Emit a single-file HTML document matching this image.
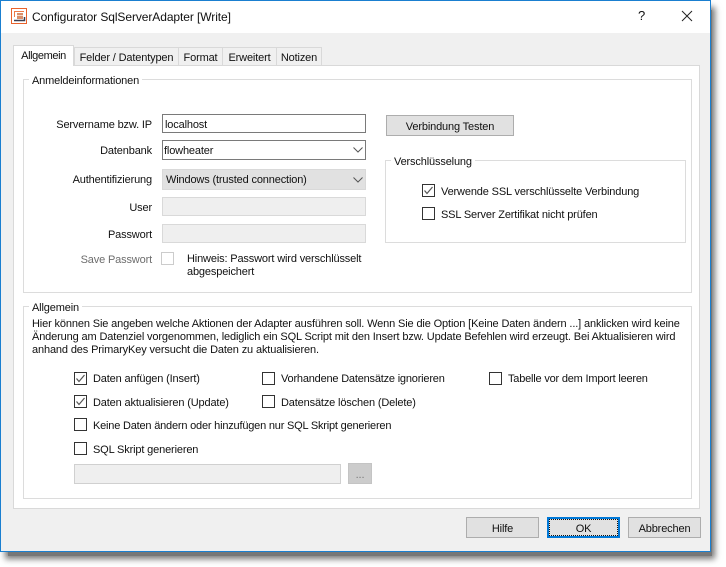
<!DOCTYPE html>
<html lang="de">
<head>
<meta charset="utf-8">
<title>Configurator SqlServerAdapter [Write]</title>
<style>
html,body{margin:0;padding:0;background:#fff;}
body{position:relative;width:726px;height:567px;overflow:hidden;font-family:"Liberation Sans",sans-serif;font-size:11px;letter-spacing:-0.15px;color:#111;}
div,span{position:absolute;box-sizing:border-box;}
.t{white-space:nowrap;line-height:18px;height:18px;}
.r{text-align:right;right:574px;}
.g{border:1px solid #dcdcdc;}
.leg{background:#fff;padding:0 3px;white-space:nowrap;line-height:18px;height:16px;overflow:hidden;}
.tab{background:#f0f0f0;border:1px solid #d9d9d9;border-bottom:0;text-align:center;line-height:20px;white-space:nowrap;}
.in{background:#fff;border:1px solid #7a7a7a;padding-left:1px;line-height:20px;}
.dis{background:#efefef;border:1px solid #d9d9d9;}
.btn{background:#e1e1e1;border:1px solid #adadad;text-align:center;line-height:22px;white-space:nowrap;}
.cb{width:13px;height:13px;background:#fff;border:1px solid #333;}
</style>
</head>
<body>
<div style="left:8px;top:10px;width:704px;height:546px;background:#777;box-shadow:0 0 6px 3px #777;"></div>
<div style="left:0;top:0;width:711px;height:552px;background:#f0f0f0;border:1px solid #1a7fd0;"></div>
<div style="left:1px;top:1px;width:709px;height:32px;background:#fff;"></div>

<svg style="position:absolute;left:11px;top:8px" width="17" height="17" viewBox="0 0 17 17">
<rect x="0.5" y="0.5" width="15" height="15" fill="#fff" stroke="#e8622c"/>
<path d="M3 3.500H13M3.500 3V9" stroke="#ee7a48" fill="none"/>
<rect x="6" y="5" width="6" height="6" fill="#d98f6a"/>
<path d="M6 7.500H12" stroke="#f4d8c8"/>
<path d="M3 12.500H13.500V9" stroke="#3a3f50" stroke-width="1.500" fill="none"/>
</svg>
<span class="t" style="left:32px;top:8px;font-size:12px;letter-spacing:-0.08px;">Configurator SqlServerAdapter [Write]</span>
<span class="t" style="left:638px;top:7px;font-size:13px;letter-spacing:0;">?</span>
<svg style="position:absolute;left:681px;top:10px" width="12" height="12" viewBox="0 0 12 12"><path d="M1 1L11 11M11 1L1 11" stroke="#222" stroke-width="1" fill="none"/></svg>

<div style="left:13px;top:65px;width:687px;height:444px;background:#fff;border:1px solid #d9d9d9;"></div>
<div class="tab" style="left:74px;top:47px;width:105px;height:18px;">Felder / Datentypen</div>
<div class="tab" style="left:178px;top:47px;width:45px;height:18px;">Format</div>
<div class="tab" style="left:222px;top:47px;width:55px;height:18px;">Erweitert</div>
<div class="tab" style="left:276px;top:47px;width:46px;height:18px;">Notizen</div>
<div class="tab" style="left:13px;top:45px;width:61px;height:21px;background:#fff;line-height:20px;letter-spacing:-0.4px;">Allgemein</div>

<div class="g" style="left:23px;top:79px;width:669px;height:214px;"></div>
<div class="leg" style="left:29px;top:72px;">Anmeldeinformationen</div>

<span class="t r" style="top:116px;">Servername bzw. IP</span>
<span class="t r" style="top:142px;">Datenbank</span>
<span class="t r" style="top:171px;">Authentifizierung</span>
<span class="t r" style="top:199px;">User</span>
<span class="t r" style="top:226px;">Passwort</span>
<span class="t r" style="top:251px;color:#6d6d6d;">Save Passwort</span>

<div class="in" style="left:162px;top:114px;width:204px;height:19px;padding-left:2px;">localhost</div>
<div class="in" style="left:162px;top:140px;width:204px;height:20px;">flowheater</div>
<svg style="position:absolute;left:353px;top:147px" width="10" height="6" viewBox="0 0 10 6"><path d="M0.500 0.500L5 5L9.500 0.500" stroke="#555" fill="none"/></svg>
<div style="left:162px;top:169px;width:204px;height:21px;background:#e1e1e1;border:1px solid #d9d9d9;padding-left:3px;line-height:21px;">Windows (trusted connection)</div>
<svg style="position:absolute;left:353px;top:177px" width="10" height="6" viewBox="0 0 10 6"><path d="M0.500 0.500L5 5L9.500 0.500" stroke="#555" fill="none"/></svg>
<div class="dis" style="left:162px;top:197px;width:204px;height:19px;"></div>
<div class="dis" style="left:162px;top:224px;width:204px;height:19px;"></div>
<div class="cb" style="left:161px;top:252px;border-color:#ccc;"></div>
<span class="t" style="left:187px;top:250px;">Hinweis: Passwort wird verschlüsselt</span>
<span class="t" style="left:187px;top:263px;">abgespeichert</span>

<div class="btn" style="left:386px;top:115px;width:128px;height:21px;">Verbindung Testen</div>

<div class="g" style="left:385px;top:160px;width:301px;height:83px;"></div>
<div class="leg" style="left:391px;top:153px;">Verschlüsselung</div>
<div class="cb" style="left:422px;top:184px;"></div>
<svg style="position:absolute;left:422px;top:184px" width="13" height="13" viewBox="0 0 13 13"><path d="M2.500 6.500L5 9.500L10.500 3" stroke="#555" stroke-width="1.200" fill="none"/></svg>
<span class="t" style="left:441px;top:183px;">Verwende SSL verschlüsselte Verbindung</span>
<div class="cb" style="left:422px;top:207px;"></div>
<span class="t" style="left:441px;top:206px;">SSL Server Zertifikat nicht prüfen</span>

<div class="g" style="left:23px;top:306px;width:669px;height:193px;"></div>
<div class="leg" style="left:29px;top:299px;">Allgemein</div>
<span class="t" style="left:32px;top:315px;letter-spacing:-0.135px;">Hier können Sie angeben welche Aktionen der Adapter ausführen soll. Wenn Sie die Option [Keine Daten ändern ...] anklicken wird keine</span>
<span class="t" style="left:32px;top:328px;letter-spacing:-0.135px;">Änderung am Datenziel vorgenommen, lediglich ein SQL Script mit den Insert bzw. Update Befehlen wird erzeugt. Bei Aktualisieren wird</span>
<span class="t" style="left:32px;top:341px;letter-spacing:-0.135px;">anhand des PrimaryKey versucht die Daten zu aktualisieren.</span>

<div class="cb" style="left:74px;top:372px;"></div>
<svg style="position:absolute;left:74px;top:372px" width="13" height="13" viewBox="0 0 13 13"><path d="M2.500 6.500L5 9.500L10.500 3" stroke="#555" stroke-width="1.200" fill="none"/></svg>
<span class="t" style="left:93px;top:370px;">Daten anfügen (Insert)</span>
<div class="cb" style="left:262px;top:372px;"></div>
<span class="t" style="left:281px;top:370px;letter-spacing:-0.2px;">Vorhandene Datensätze ignorieren</span>
<div class="cb" style="left:489px;top:372px;"></div>
<span class="t" style="left:508px;top:370px;letter-spacing:-0.2px;">Tabelle vor dem Import leeren</span>

<div class="cb" style="left:74px;top:395px;"></div>
<svg style="position:absolute;left:74px;top:395px" width="13" height="13" viewBox="0 0 13 13"><path d="M2.500 6.500L5 9.500L10.500 3" stroke="#555" stroke-width="1.200" fill="none"/></svg>
<span class="t" style="left:93px;top:394px;">Daten aktualisieren (Update)</span>
<div class="cb" style="left:262px;top:395px;"></div>
<span class="t" style="left:281px;top:394px;">Datensätze löschen (Delete)</span>

<div class="cb" style="left:74px;top:418px;"></div>
<span class="t" style="left:93px;top:417px;letter-spacing:-0.2px;">Keine Daten ändern oder hinzufügen nur SQL Skript generieren</span>
<div class="cb" style="left:74px;top:442px;"></div>
<span class="t" style="left:93px;top:441px;">SQL Skript generieren</span>

<div class="dis" style="left:74px;top:464px;width:267px;height:20px;border-color:#d0d0d0;"></div>
<div class="btn" style="left:348px;top:463px;width:24px;height:21px;background:#ccc;border-color:#c4c4c4;color:#777;">...</div>

<div class="btn" style="left:466px;top:517px;width:73px;height:21px;">Hilfe</div>
<div class="btn" style="left:547px;top:517px;width:73px;height:21px;border:2px solid #0078d7;line-height:20px;">OK</div>
<div style="left:549px;top:519px;width:69px;height:17px;border:1px dotted #111;"></div>
<div class="btn" style="left:628px;top:517px;width:73px;height:21px;">Abbrechen</div>
</body>
</html>
